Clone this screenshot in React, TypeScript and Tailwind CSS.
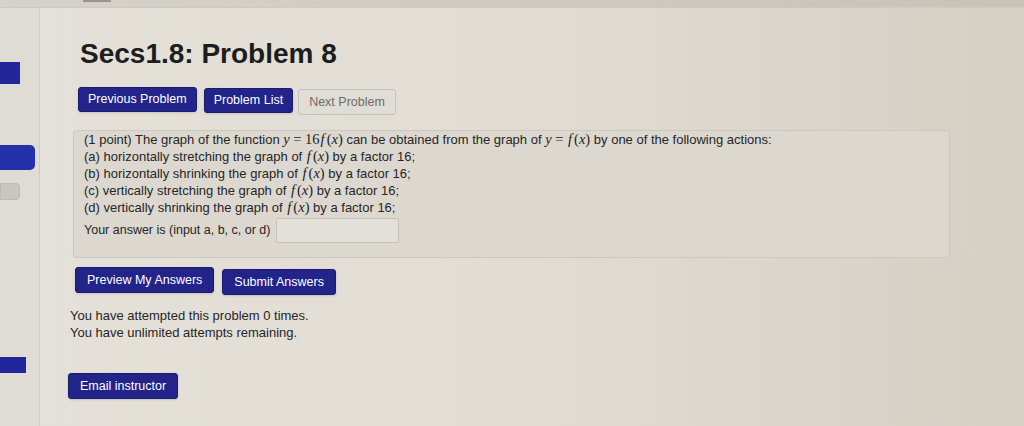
import React from 'react';

const font = { fontFamily: '"Liberation Sans", Arial, sans-serif' };

const Btn: React.FC<{ children: React.ReactNode; className?: string }> = ({ children, className = '' }) => (
  <button
    className={`h-[25px] px-[9px] rounded-[3px] bg-[#22248a] text-white text-[12.5px] leading-none border border-[#1a1c70] shadow-sm ${className}`}
  >
    {children}
  </button>
);

// MathJax-like inline math
const M: React.FC<{ children: React.ReactNode }> = ({ children }) => (
  <span className="text-[14.5px] leading-none text-[#1c1c1c]" style={{ fontFamily: '"Liberation Serif", "Times New Roman", serif' }}>
    {children}
  </span>
);
const I: React.FC<{ children: React.ReactNode }> = ({ children }) => <i>{children}</i>;
const F: React.FC = () => <i className="pl-[1px] pr-[2px]">f</i>;

const fx = (
  <M>
    <F />(<I>x</I>)
  </M>
);

const App: React.FC = () => {
  return (
    <div className="w-[1024px] h-[426px] overflow-hidden flex flex-col bg-gradient-to-r from-[#e4e1da] via-[#e2ddd3] to-[#d5cfc4] text-[#222]" style={font}>
      {/* top header edge */}
      <div className="h-[8px] shrink-0 bg-gradient-to-r from-[#d6d2cb] to-[#c9c2b7] border-b border-[#cfc9bf] relative">
        <div className="absolute left-[83px] top-0 w-[28px] h-[2px] bg-[#9a968f]"></div>
      </div>

      <div className="flex flex-1">
        {/* sidebar */}
        <div className="w-[40px] shrink-0 bg-[#dfdcd6] border-r border-[#cfcbc4] flex flex-col">
          <div className="mt-[54px] w-[20px] h-[22px] bg-[#23269a]"></div>
          <div className="mt-[61px] w-[35px] h-[25px] bg-[#2430a8] rounded-r-[5px]"></div>
          <div className="mt-[13px] w-[20px] h-[17px] bg-[#c9c6c1] rounded-r-[4px] border border-[#bdb9b3]"></div>
          <div className="mt-[157px] w-[26px] h-[16px] bg-[#23269a]"></div>
        </div>

        {/* main */}
        <div className="flex-1 pl-[33px] pr-[74px]">
          <h1 className="mt-[30px] ml-[7px] text-[28px] leading-[32px] font-bold text-[#1d1d1d]">Secs1.8: Problem 8</h1>

          <div className="mt-[17px] ml-[5px] flex items-start gap-[7px]">
            <Btn>Previous Problem</Btn>
            <Btn className="mt-[1px]">Problem List</Btn>
            <button className="mt-[2px] -ml-[2px] h-[26px] px-[10px] rounded-[3px] bg-[#e0ddd7] text-[#6e6c68] text-[12.5px] leading-none border border-[#c6c2bb]">
              Next Problem
            </button>
          </div>

          <div className="mt-[15px] h-[128px] bg-[#dcd8cf] border border-[#cdc8bf] rounded-[3px] pl-[10px] text-[13px] text-[#262626]">
            <div className="h-[17px] leading-[17px]">
              (1 point) The graph of the function{' '}
              <M>
                <I>y</I> = 16<F />(<I>x</I>)
              </M>{' '}
              can be obtained from the graph of{' '}
              <M>
                <I>y</I> = <F />(<I>x</I>)
              </M>{' '}
              by one of the following actions:
            </div>
            <div className="h-[17px] leading-[17px]">(a) horizontally stretching the graph of {fx} by a factor 16;</div>
            <div className="h-[17px] leading-[17px]">(b) horizontally shrinking the graph of {fx} by a factor 16;</div>
            <div className="h-[17px] leading-[17px]">(c) vertically stretching the graph of {fx} by a factor 16;</div>
            <div className="h-[17px] leading-[17px]">(d) vertically shrinking the graph of {fx} by a factor 16;</div>
            <div className="mt-[2px] flex items-center gap-[6px] text-[12.5px]">
              <span>Your answer is (input a, b, c, or d)</span>
              <div className="w-[123px] h-[25px] bg-[#e3e0da] border border-[#c7c2b9] rounded-[2px]"></div>
            </div>
          </div>

          <div className="mt-[9px] ml-[2px] flex items-start gap-[8px]">
            <Btn className="h-[26px] px-[11px]">Preview My Answers</Btn>
            <Btn className="h-[26px] mt-[2px] px-[11px]">Submit Answers</Btn>
          </div>

          <div className="mt-[12px] -ml-[3px] text-[13px] leading-[17px] text-[#262626]">
            <div>You have attempted this problem 0 times.</div>
            <div>You have unlimited attempts remaining.</div>
          </div>

          <Btn className="mt-[32px] -ml-[5px] h-[26px] px-[11px]">Email instructor</Btn>
        </div>
      </div>
    </div>
  );
};

export default App;
